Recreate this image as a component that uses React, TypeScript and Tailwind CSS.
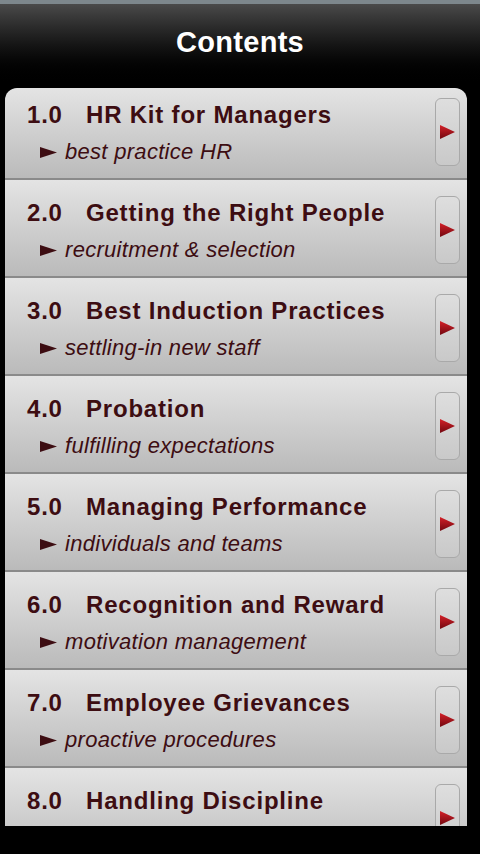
import React from 'react';

const items = [
  { num: '1.0', title: 'HR Kit for Managers', sub: 'best practice HR' },
  { num: '2.0', title: 'Getting the Right People', sub: 'recruitment & selection' },
  { num: '3.0', title: 'Best Induction Practices', sub: 'settling-in new staff' },
  { num: '4.0', title: 'Probation', sub: 'fulfilling expectations' },
  { num: '5.0', title: 'Managing Performance', sub: 'individuals and teams' },
  { num: '6.0', title: 'Recognition and Reward', sub: 'motivation management' },
  { num: '7.0', title: 'Employee Grievances', sub: 'proactive procedures' },
  { num: '8.0', title: 'Handling Discipline', sub: '' },
];

function ArrowButton() {
  return (
    <div className="w-[25px] h-[68px] rounded-[6px] border border-[#a9a9a9] bg-gradient-to-b from-[#dedede] to-[#c9c9c9] flex items-center justify-center shrink-0">
      <svg width="17" height="16" viewBox="0 0 17 16">
        <defs>
          <linearGradient id="tri" x1="0" y1="0" x2="0" y2="1">
            <stop offset="0" stopColor="#d42028" />
            <stop offset="1" stopColor="#720810" />
          </linearGradient>
        </defs>
        <polygon points="1,1 16,8 1,15" fill="url(#tri)" />
      </svg>
    </div>
  );
}

export default function App() {
  return (
    <div className="w-[480px] h-[854px] bg-black overflow-hidden flex flex-col" style={{ fontFamily: '"Liberation Sans", Arial, sans-serif' }}>
      <div className="h-[4px] bg-[#7d878c] shrink-0" />
      <div className="h-[84px] shrink-0 bg-gradient-to-b from-[#4a4a4a] via-[#141414] via-50% to-black flex items-start justify-center pt-[21px]">
        <h1 className="text-white font-bold text-[29px] leading-[34px] tracking-[0.3px]">Contents</h1>
      </div>
      <div className="ml-[5px] w-[462px] h-[738px] overflow-hidden rounded-t-[12px] shrink-0">
        {items.map((it, i) => (
          <div
            key={it.num}
            className={`${i === 0 ? 'h-[92px] pt-[13px]' : 'h-[98px] pt-[19px]'} bg-gradient-to-b from-[#e4e4e4] to-[#bababa] border-b-2 border-[#8a8a8a] flex pl-[22px] pr-[7px]`}
          >
            <div className="flex-1 text-[#3d0d12]">
              <div className="flex text-[24px] leading-[28px] font-bold tracking-[0.8px]">
                <span className="w-[59px]">{it.num}</span>
                <span>{it.title}</span>
              </div>
              {it.sub && (
                <div className="flex items-center mt-[10px] pl-[13px] text-[22px] leading-[26px] italic tracking-[0.3px]">
                  <svg width="17" height="13" viewBox="0 0 17 13" className="mr-[8px] shrink-0">
                    <polygon points="0,1 17,6.5 0,12" fill="#3d0d12" />
                  </svg>
                  <span>{it.sub}</span>
                </div>
              )}
            </div>
            <div className={i === 0 ? 'mt-[-3px]' : 'mt-[-3px]'}>
              <ArrowButton />
            </div>
          </div>
        ))}
      </div>
    </div>
  );
}
